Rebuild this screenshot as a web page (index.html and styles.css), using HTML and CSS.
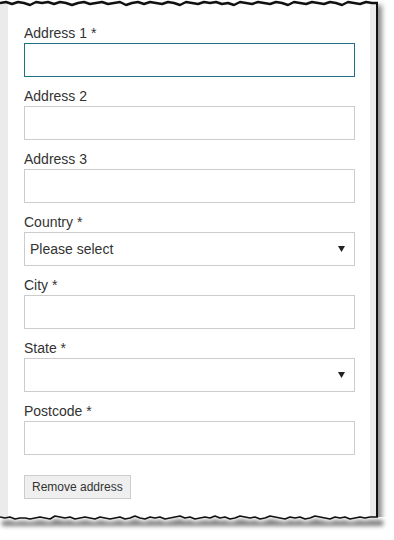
FILE: index.html
```html
<!DOCTYPE html>
<html lang="en">
<head>
<meta charset="utf-8">
<title>Address form</title>
<link rel="stylesheet" href="styles.css">
</head>
<body>
<div class="sheet">
  <svg class="edge-top" width="380" height="8" viewBox="0 0 380 8" aria-hidden="true">
    <path class="edge-fill" d="M0,0 L0,3 L6,2 L12,4 L18,2 L24,3 L30,5 L36,2 L42,3 L48,2 L54,4 L60,2 L66,3 L72,5 L78,3 L84,2 L90,4 L96,3 L102,2 L108,4 L114,3 L120,2 L126,5 L132,3 L138,2 L144,4 L150,2 L156,3 L162,4 L168,2 L174,3 L180,5 L186,2 L192,3 L198,4 L204,2 L210,3 L216,2 L222,4 L228,3 L234,5 L240,2 L246,3 L252,4 L258,2 L264,3 L270,4 L276,2 L282,3 L288,5 L294,2 L300,3 L306,4 L312,2 L318,3 L324,4 L330,2 L336,3 L342,5 L348,2 L354,3 L360,4 L366,2 L372,3 L380,3 L380,0 Z"/>
    <polyline class="edge-line thick" points="0,3 6,2 12,4 18,2 24,3 30,5 36,2 42,3 48,2 54,4 60,2 66,3 72,5 78,3 84,2 90,4 96,3 102,2 108,4 114,3 120,2 126,5 132,3 138,2 144,4 150,2 156,3 162,4 168,2 174,3 180,5 186,2 192,3 198,4 204,2 210,3 216,2 222,4 228,3 234,5 240,2 246,3 252,4 258,2 264,3 270,4 276,2 282,3 288,5 294,2 300,3 306,4 312,2 318,3 324,4 330,2 336,3 342,5 348,2 354,3 360,4 366,2 372,3 378,3"/>
  </svg>

  <form class="card">
    <div class="field">
      <label class="label" for="a1">Address 1 *</label>
      <input class="input is-focus" id="a1" type="text">
    </div>
    <div class="field">
      <label class="label" for="a2">Address 2</label>
      <input class="input" id="a2" type="text">
    </div>
    <div class="field">
      <label class="label" for="a3">Address 3</label>
      <input class="input" id="a3" type="text">
    </div>
    <div class="field">
      <label class="label" for="country">Country *</label>
      <div class="select-wrap">
        <select class="input select" id="country">
          <option>Please select</option>
        </select>
        <svg class="arrow" width="7" height="6" viewBox="0 0 7 6" aria-hidden="true"><path d="M0,0 L7,0 L3.5,6 Z"/></svg>
      </div>
    </div>
    <div class="field">
      <label class="label" for="city">City *</label>
      <input class="input" id="city" type="text">
    </div>
    <div class="field">
      <label class="label" for="state">State *</label>
      <div class="select-wrap">
        <select class="input select" id="state">
          <option></option>
        </select>
        <svg class="arrow" width="7" height="6" viewBox="0 0 7 6" aria-hidden="true"><path d="M0,0 L7,0 L3.5,6 Z"/></svg>
      </div>
    </div>
    <div class="field">
      <label class="label" for="post">Postcode *</label>
      <input class="input" id="post" type="text">
    </div>
    <button class="btn" type="button">Remove address</button>
  </form>

  <svg class="edge-bottom" width="394" height="35" viewBox="0 0 394 35" aria-hidden="true">
    <defs>
      <filter id="blur" x="-5%" y="-100%" width="110%" height="300%">
        <feGaussianBlur stdDeviation="2"/>
      </filter>
    </defs>
    <path class="edge-fill" d="M0,12 L5,13 L10,12 L15,14 L20,13 L25,13 L30,14 L35,13 L40,12 L45,13 L50,14 L55,11 L60,12 L65,13 L70,12 L75,14 L80,13 L85,12 L90,13 L95,14 L100,12 L105,13 L110,14 L115,13 L120,12 L125,14 L130,13 L135,11 L140,13 L145,14 L150,12 L155,13 L160,12 L165,14 L170,13 L175,12 L180,11 L185,13 L190,12 L195,14 L200,13 L205,12 L210,13 L215,11 L220,13 L225,12 L230,14 L235,13 L240,11 L245,12 L250,13 L255,12 L260,14 L265,13 L270,11 L275,12 L280,13 L285,14 L290,12 L295,13 L300,12 L305,14 L310,13 L315,11 L320,12 L325,13 L330,14 L335,12 L340,13 L345,12 L350,14 L355,13 L360,12 L365,13 L370,12 L378,12 L394,12 L394,35 L0,35 Z"/>
    <path class="edge-shadow" filter="url(#blur)" d="M2,15 L5,16 L10,15 L15,17 L20,16 L25,16 L30,17 L35,16 L40,15 L45,16 L50,17 L55,14 L60,15 L65,16 L70,15 L75,17 L80,16 L85,15 L90,16 L95,17 L100,15 L105,16 L110,17 L115,16 L120,15 L125,17 L130,16 L135,14 L140,16 L145,17 L150,15 L155,16 L160,15 L165,17 L170,16 L175,15 L180,14 L185,16 L190,15 L195,17 L200,16 L205,15 L210,16 L215,14 L220,16 L225,15 L230,17 L235,16 L240,14 L245,15 L250,16 L255,15 L260,17 L265,16 L270,14 L275,15 L280,16 L285,17 L290,15 L295,16 L300,15 L305,17 L310,16 L315,14 L320,15 L325,16 L330,17 L335,15 L340,16 L345,15 L350,17 L355,16 L360,15 L365,16 L370,15 L382,15 L384,18 L382,21 L2,21 Z"/>
    <polyline class="edge-line" points="0,12 5,13 10,12 15,14 20,13 25,13 30,14 35,13 40,12 45,13 50,14 55,11 60,12 65,13 70,12 75,14 80,13 85,12 90,13 95,14 100,12 105,13 110,14 115,13 120,12 125,14 130,13 135,11 140,13 145,14 150,12 155,13 160,12 165,14 170,13 175,12 180,11 185,13 190,12 195,14 200,13 205,12 210,13 215,11 220,13 225,12 230,14 235,13 240,11 245,12 250,13 255,12 260,14 265,13 270,11 275,12 280,13 285,14 290,12 295,13 300,12 305,14 310,13 315,11 320,12 325,13 330,14 335,12 340,13 345,12 350,14 355,13 360,12 365,13 370,12 378,12"/>
  </svg>
</div>
</body>
</html>
```

FILE: styles.css
```css
html, body {
  margin: 0;
  padding: 0;
  background: #ffffff;
}

body {
  font-family: "Liberation Sans", Arial, sans-serif;
  color: #333333;
  width: 394px;
  height: 540px;
  overflow: hidden;
}

.sheet {
  position: relative;
  width: 378px;
  height: 518px;
  padding: 0 6px 0 8px;
  box-sizing: border-box;
  background: #ebebeb;
  border-right: 2px solid #111111;
  box-shadow: 4px 5px 5px rgba(0, 0, 0, 0.45);
  display: flex;
}

.card {
  flex: 1;
  background: #ffffff;
  padding: 23px 15px 0 16px;
  margin: 0;
  display: flex;
  flex-direction: column;
}

.field {
  display: flex;
  flex-direction: column;
  margin-bottom: 9px;
}

.label {
  font-size: 14px;
  line-height: 20px;
  color: #333333;
}

.input {
  box-sizing: border-box;
  width: 100%;
  height: 34px;
  margin: 0;
  padding: 0 6px;
  border: 1px solid #cccccc;
  border-radius: 0;
  background: #ffffff;
  font-family: "Liberation Sans", Arial, sans-serif;
  font-size: 14px;
  color: #333333;
  outline: none;
}

.input.is-focus {
  border-color: #1f7082;
}

.select-wrap {
  position: relative;
  display: flex;
}

.select {
  appearance: none;
  -webkit-appearance: none;
  padding-left: 5px;
}

.arrow {
  position: absolute;
  right: 10px;
  top: 14px;
  fill: #222222;
}

.btn {
  align-self: flex-start;
  margin-top: 11px;
  height: 24px;
  box-sizing: border-box;
  padding: 0 7px;
  border: 1px solid #cccccc;
  border-radius: 0;
  background: #efefef;
  font-family: "Liberation Sans", Arial, sans-serif;
  font-size: 12px;
  color: #333333;
}

.edge-top {
  position: absolute;
  top: 0;
  left: 0;
}

.edge-bottom {
  position: absolute;
  top: 505px;
  left: 0;
}

.edge-fill {
  fill: #ffffff;
}

.edge-line {
  fill: none;
  stroke: #111111;
  stroke-width: 1.6;
  stroke-linejoin: round;
}

.edge-line.thick {
  stroke-width: 2.4;
}

.edge-shadow {
  fill: rgba(0, 0, 0, 0.5);
}
```
